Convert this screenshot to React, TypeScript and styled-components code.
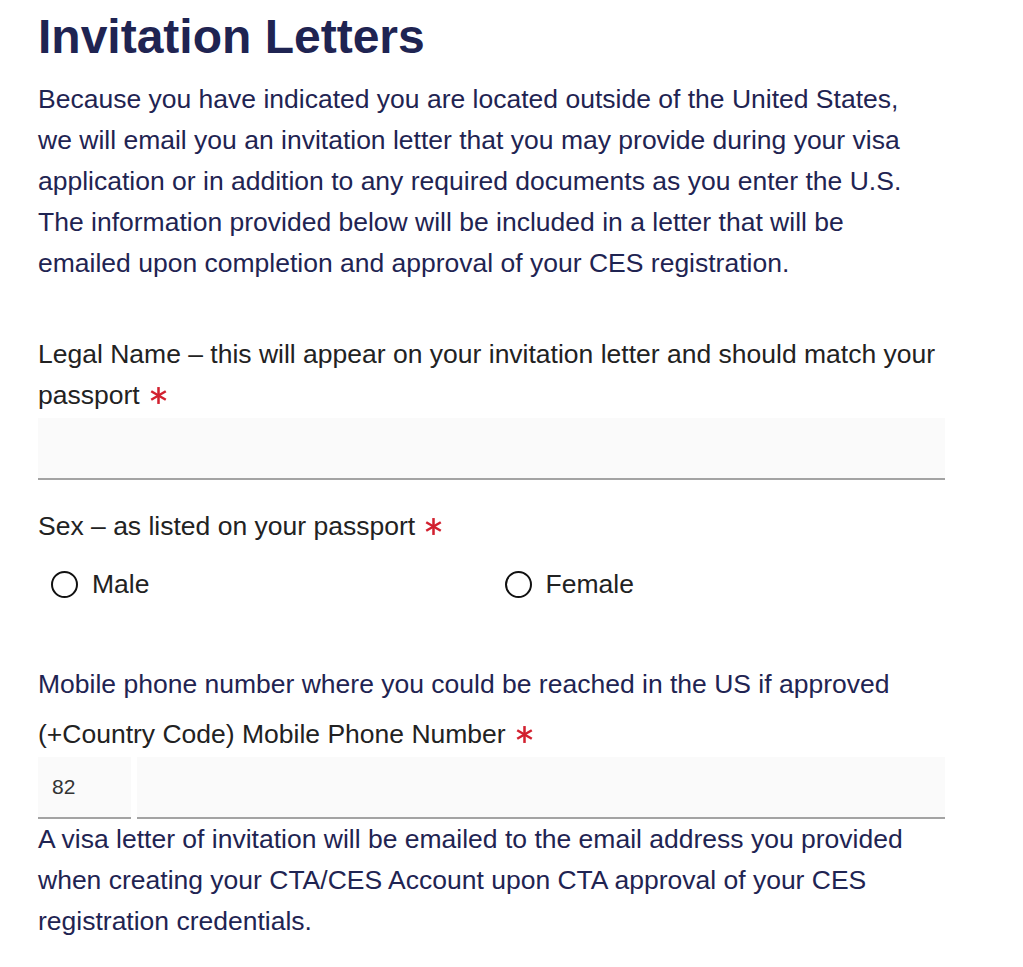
import React from 'react';
import styled, { createGlobalStyle } from 'styled-components';

const GlobalStyle = createGlobalStyle`
	body {
		margin: 0;
		background: #ffffff;
		font-family: 'Liberation Sans', Arial, sans-serif;
	}
`;

const Page = styled.div`
	width: 920px;
	padding: 8px 0 0 38px;
`;

const Title = styled.h1`
	margin: 0;
	font-size: 48px;
	line-height: 58px;
	font-weight: 700;
	color: #1f2452;
`;

const Intro = styled.p<{ $top?: number }>`
	margin: ${({ $top }) => $top ?? 0}px 0 0;
	font-size: 26.5px;
	line-height: 41px;
	color: #1f2452;
`;

const Field = styled.div<{ $top: number }>`
	width: 907px;
	margin-top: ${({ $top }) => $top}px;
`;

const Label = styled.label`
	display: block;
	font-size: 26.5px;
	line-height: 41px;
	color: #222222;
	white-space: nowrap;
`;

const Required = styled.span`
	display: inline-block;
	margin-left: 9px;
	width: 19px;
	height: 19px;
	vertical-align: -1px;
`;

const TextInput = styled.input<{ $width?: string }>`
	box-sizing: border-box;
	display: block;
	width: ${({ $width }) => $width ?? '100%'};
	height: 62px;
	margin-top: 2px;
	padding: 0 14px;
	border: none;
	border-bottom: 2px solid #a3a3a3;
	background: #fafafa;
	font-family: 'Liberation Sans', Arial, sans-serif;
	font-size: 21px;
	color: #333333;
	outline: none;
`;

const PhoneRow = styled.div`
	display: flex;
	gap: 6px;
	margin-top: 2px;

	input {
		margin-top: 0;
	}
`;

const RadioGrid = styled.div`
	display: grid;
	grid-template-columns: 1fr 1fr;
	margin-top: 17px;
`;

const RadioOption = styled.label`
	display: flex;
	align-items: center;
	gap: 14px;
	padding-left: 13px;
	height: 41px;
	font-size: 26.5px;
	color: #222222;
`;

const RadioCircle = styled.span`
	box-sizing: border-box;
	width: 27px;
	height: 27px;
	border: 2px solid #111111;
	border-radius: 50%;
`;

const Note = styled.p<{ $top?: number }>`
	margin: ${({ $top }) => $top ?? 0}px 0 0;
	font-size: 26.5px;
	line-height: 41px;
	color: #1f2452;
	white-space: nowrap;
`;

const Asterisk = () => (
	<Required>
		<svg viewBox="0 0 18 18" width="19" height="19">
			<g stroke="#d2202f" strokeWidth="2.4" strokeLinecap="butt">
				<line x1="9" y1="1" x2="9" y2="17" />
				<line x1="2.1" y1="5" x2="15.9" y2="13" />
				<line x1="2.1" y1="13" x2="15.9" y2="5" />
			</g>
		</svg>
	</Required>
);

const App: React.FC = (): JSX.Element => {
	return (
		<Page>
			<GlobalStyle />
			<Title>Invitation Letters</Title>
			<Intro $top={13}>
				Because you have indicated you are located outside of the United States,
				<br />
				we will email you an invitation letter that you may provide during your visa
				<br />
				application or in addition to any required documents as you enter the U.S.
				<br />
				The information provided below will be included in a letter that will be
				<br />
				emailed upon completion and approval of your CES registration.
			</Intro>

			<Field $top={50}>
				<Label>
					Legal Name – this will appear on your invitation letter and should match your
					<br />
					passport
					<Asterisk />
				</Label>
				<TextInput type="text" />
			</Field>

			<Field $top={26}>
				<Label>
					Sex – as listed on your passport
					<Asterisk />
				</Label>
				<RadioGrid>
					<RadioOption>
						<RadioCircle />
						Male
					</RadioOption>
					<RadioOption>
						<RadioCircle />
						Female
					</RadioOption>
				</RadioGrid>
			</Field>

			<Note $top={59}>Mobile phone number where you could be reached in the US if approved</Note>

			<Field $top={9}>
				<Label>
					(+Country Code) Mobile Phone Number
					<Asterisk />
				</Label>
				<PhoneRow>
					<TextInput type="text" defaultValue="82" $width="93px" />
					<TextInput type="text" />
				</PhoneRow>
			</Field>

			<Note>
				A visa letter of invitation will be emailed to the email address you provided
				<br />
				when creating your CTA/CES Account upon CTA approval of your CES
				<br />
				registration credentials.
			</Note>
		</Page>
	);
};

export default App;
